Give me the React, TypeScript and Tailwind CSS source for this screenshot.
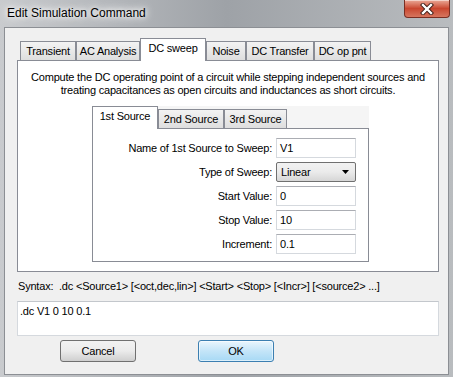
const ui = "font-['Liberation_Sans',Arial,sans-serif] text-[11px] tracking-[-0.2px] text-black";

const outerTabs = [
  { label: "Transient", w: "w-[56px]" },
  { label: "AC Analysis", w: "w-[64px]" },
  { label: "DC sweep", w: "w-[66px]", active: true },
  { label: "Noise", w: "w-[40px]" },
  { label: "DC Transfer", w: "w-[68px]" },
  { label: "DC op pnt", w: "w-[57px]" },
];

const innerTabs = [
  { label: "1st Source", w: "w-[66px]", active: true },
  { label: "2nd Source", w: "w-[66px]" },
  { label: "3rd Source", w: "w-[63px]" },
];

const fields = [
  { label: "Start Value:", value: "0" },
  { label: "Stop Value:", value: "10" },
  { label: "Increment:", value: "0.1" },
];

function Tab({ label, w, active }: { label: string; w: string; active?: boolean }) {
  if (active) {
    return (
      <div className={`relative z-10 -mb-px h-[23px] ${w} border border-b-0 border-[#898c95] bg-white pt-[3px] text-center leading-[13px]`}>
        {label}
      </div>
    );
  }
  return (
    <div className={`h-[19px] ${w} border border-b-0 border-[#898c95] bg-gradient-to-b from-[#f3f3f3] to-[#dedede] pt-[3px] text-center leading-[13px]`}>
      {label}
    </div>
  );
}

function TextBox({ value }: { value: string }) {
  return (
    <div className="h-[20px] w-[80px] border border-[#d5d9de] border-t-[#abadb3] bg-white pl-[3px] leading-[18px]">
      {value}
    </div>
  );
}

function CloseButton() {
  return (
    <div className="mr-[3px] flex h-[18px] w-[46px] items-center justify-center rounded-b-[4px] border border-t-0 border-[#7a2e22] bg-gradient-to-b from-[#e9a897] via-[#c9462f] to-[#d6755e] shadow-[inset_0_1px_0_rgba(255,255,255,0.5)]">
      <svg width="16" height="12" viewBox="0 0 16 12">
        <path d="M4 2 L12 10 M12 2 L4 10" stroke="#3b1a14" strokeWidth="4.2" strokeLinecap="square" />
        <path d="M4 2 L12 10 M12 2 L4 10" stroke="#ffffff" strokeWidth="2.4" strokeLinecap="square" />
      </svg>
    </div>
  );
}

export default function App() {
  return (
    <div className="flex h-[377px] w-[453px] flex-col bg-gradient-to-r from-[#c9cbce] via-[#9ea2a7] to-[#b9bcbf]">
      <div className="flex h-[27px] items-start">
        <div className="pl-[7px] pt-[5px] font-['Liberation_Sans',Arial,sans-serif] text-[12px] leading-[16px] text-black [text-shadow:0_0_8px_#fff,0_0_4px_#fff,0_0_12px_#fff]">
          Edit Simulation Command
        </div>
        <div className="ml-auto">
          <CloseButton />
        </div>
      </div>

      <div className={`mx-[4px] flex h-[348px] flex-col border border-[#8c8f94] bg-[#f0f0f0] px-[12px] pt-[10px] ${ui}`}>
        <div className="flex h-[22px] items-end pl-[3px]">
          {outerTabs.map((t) => (
            <Tab key={t.label} label={t.label} w={t.w} active={t.active} />
          ))}
        </div>

        <div className="flex h-[212px] w-[422px] flex-col border border-[#898c95] bg-white">
          <div className="pt-[10px] text-center leading-[13px]">
            <div>Compute the DC operating point of a circuit while stepping independent sources and</div>
            <div>treating capacitances as open circuits and inductances as short circuits.</div>
          </div>

          <div className="ml-[74px] mt-[9px] w-[277px]">
            <div className="flex h-[22px] items-end bg-[#f5f5f5]">
              {innerTabs.map((t) => (
                <Tab key={t.label} label={t.label} w={t.w} active={t.active} />
              ))}
            </div>
            <div className="flex h-[134px] flex-col gap-[4px] border border-[#898c95] bg-white pt-[9px] pr-[12px]">
              <div className="flex items-center justify-end gap-[4px]">
                <span>Name of 1st Source to Sweep:</span>
                <TextBox value="V1" />
              </div>
              <div className="flex items-center justify-end gap-[4px]">
                <span>Type of Sweep:</span>
                <div className="flex h-[20px] w-[80px] items-center justify-between rounded-[2px] border border-[#707070] bg-gradient-to-b from-[#f2f2f2] via-[#ebebeb] to-[#d6d6d6] pl-[4px] pr-[6px]">
                  <span>Linear</span>
                  <svg width="7" height="4" viewBox="0 0 7 4">
                    <path d="M0 0 H7 L3.5 4 Z" fill="#000" />
                  </svg>
                </div>
              </div>
              {fields.map((f) => (
                <div key={f.label} className="flex items-center justify-end gap-[4px]">
                  <span>{f.label}</span>
                  <TextBox value={f.value} />
                </div>
              ))}
            </div>
          </div>
        </div>

        <div className="mt-[8px] h-[13px] whitespace-pre pl-[1px] leading-[13px]">
          {"Syntax:  .dc <Source1> [<oct,dec,lin>] <Start> <Stop> [<Incr>] [<source2> ...]"}
        </div>

        <div className="mt-[8px] h-[35px] w-[422px] border border-[#d5d9de] border-t-[#c3c7cc] bg-white pl-[2px] pt-[3px] leading-[13px]">
          .dc V1 0 10 0.1
        </div>

        <div className="mt-[4px] flex">
          <div className="ml-[43px] flex h-[22px] w-[76px] items-center justify-center rounded-[3px] border border-[#707070] bg-gradient-to-b from-[#f2f2f2] via-[#ebebeb] to-[#cfcfcf]">
            Cancel
          </div>
          <div className="ml-[62px] flex h-[22px] w-[76px] items-center justify-center rounded-[3px] border border-[#3c7fb1] bg-gradient-to-b from-[#eaf6fd] via-[#c4e5f8] to-[#a7d9f5] shadow-[inset_0_0_0_1px_rgba(255,255,255,0.6)]">
            OK
          </div>
        </div>
      </div>
    </div>
  );
}
